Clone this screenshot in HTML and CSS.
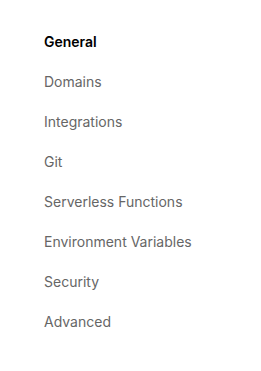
FILE: index.html
```html
<!DOCTYPE html>
<html lang="en">
<head>
    <meta charset="UTF-8">
    <meta name="viewport" content="width=device-width, initial-scale=1.0">
    <title>Settings</title>
    <link rel="stylesheet" href="styles.css">
</head>
<body>
    <nav class="settings-nav">
        <a class="nav-item active" href="#">General</a>
        <a class="nav-item" href="#">Domains</a>
        <a class="nav-item" href="#">Integrations</a>
        <a class="nav-item" href="#">Git</a>
        <a class="nav-item" href="#">Serverless Functions</a>
        <a class="nav-item" href="#">Environment Variables</a>
        <a class="nav-item" href="#">Security</a>
        <a class="nav-item" href="#">Advanced</a>
    </nav>
</body>
</html>
```

FILE: styles.css
```css
body {
    margin: 0;
    background: #fff;
    font-family: Inter, "Liberation Sans", sans-serif;
}
.settings-nav {
    display: flex;
    flex-direction: column;
    gap: 20px;
    padding: 32px 0 0 44px;
}
.nav-item {
    font-size: 14px;
    line-height: 20px;
    color: #666;
    text-decoration: none;
}
.nav-item.active {
    color: #000;
    font-weight: 600;
}
```
